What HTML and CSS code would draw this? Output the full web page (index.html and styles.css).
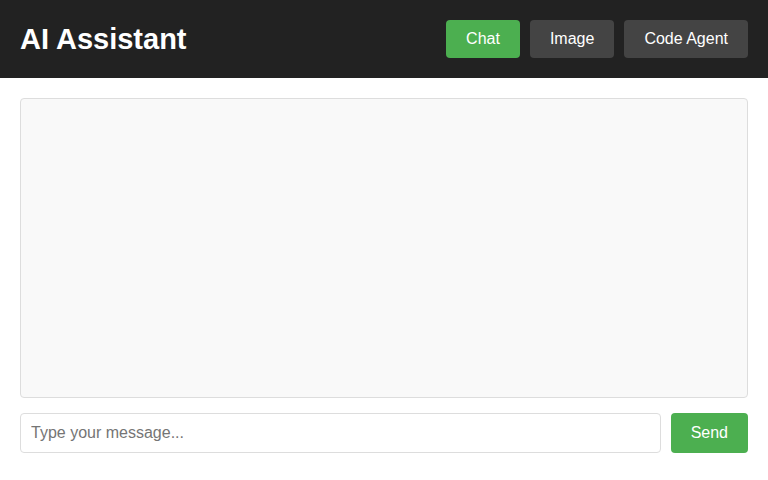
FILE: index.html
```html
<!DOCTYPE html>
<html>
<head>
<meta charset="utf-8">
<link rel="stylesheet" href="styles.css">
</head>
<body>
<header class="header">
  <h1 class="title">AI Assistant</h1>
  <nav class="nav">
    <button class="btn btn-active">Chat</button>
    <button class="btn">Image</button>
    <button class="btn">Code Agent</button>
  </nav>
</header>
<main class="main">
  <div class="chat-box"></div>
  <div class="input-row">
    <input class="msg-input" type="text" placeholder="Type your message...">
    <button class="send-btn">Send</button>
  </div>
</main>
</body>
</html>
```
FILE: styles.css
```css
* { box-sizing: border-box; }
body {
  margin: 0;
  font-family: "Liberation Sans", Arial, sans-serif;
  background: #fff;
  color: #333;
}
.header {
  background: #222;
  color: #fff;
  padding: 20px;
  display: flex;
  justify-content: space-between;
  align-items: center;
}
.title {
  margin: 0;
  font-size: 29px;
  font-weight: bold;
}
.nav {
  display: flex;
  gap: 10px;
}
.btn {
  background: #444;
  color: #fff;
  border: none;
  border-radius: 4px;
  padding: 10px 20px;
  font-size: 16px;
  font-family: inherit;
  line-height: 18px;
}
.btn-active { background: #4caf50; }
.main {
  padding: 20px;
}
.chat-box {
  height: 300px;
  background: #f9f9f9;
  border: 1px solid #ddd;
  border-radius: 4px;
}
.input-row {
  display: flex;
  gap: 10px;
  margin-top: 15px;
}
.msg-input {
  flex: 1;
  height: 40px;
  padding: 10px;
  font-size: 16px;
  font-family: inherit;
  border: 1px solid #ddd;
  border-radius: 4px;
  color: #333;
}
.msg-input::placeholder { color: #757575; }
.send-btn {
  background: #4caf50;
  color: #fff;
  border: none;
  border-radius: 4px;
  padding: 10px 20px;
  font-size: 16px;
  font-family: inherit;
  height: 40px;
}
```
